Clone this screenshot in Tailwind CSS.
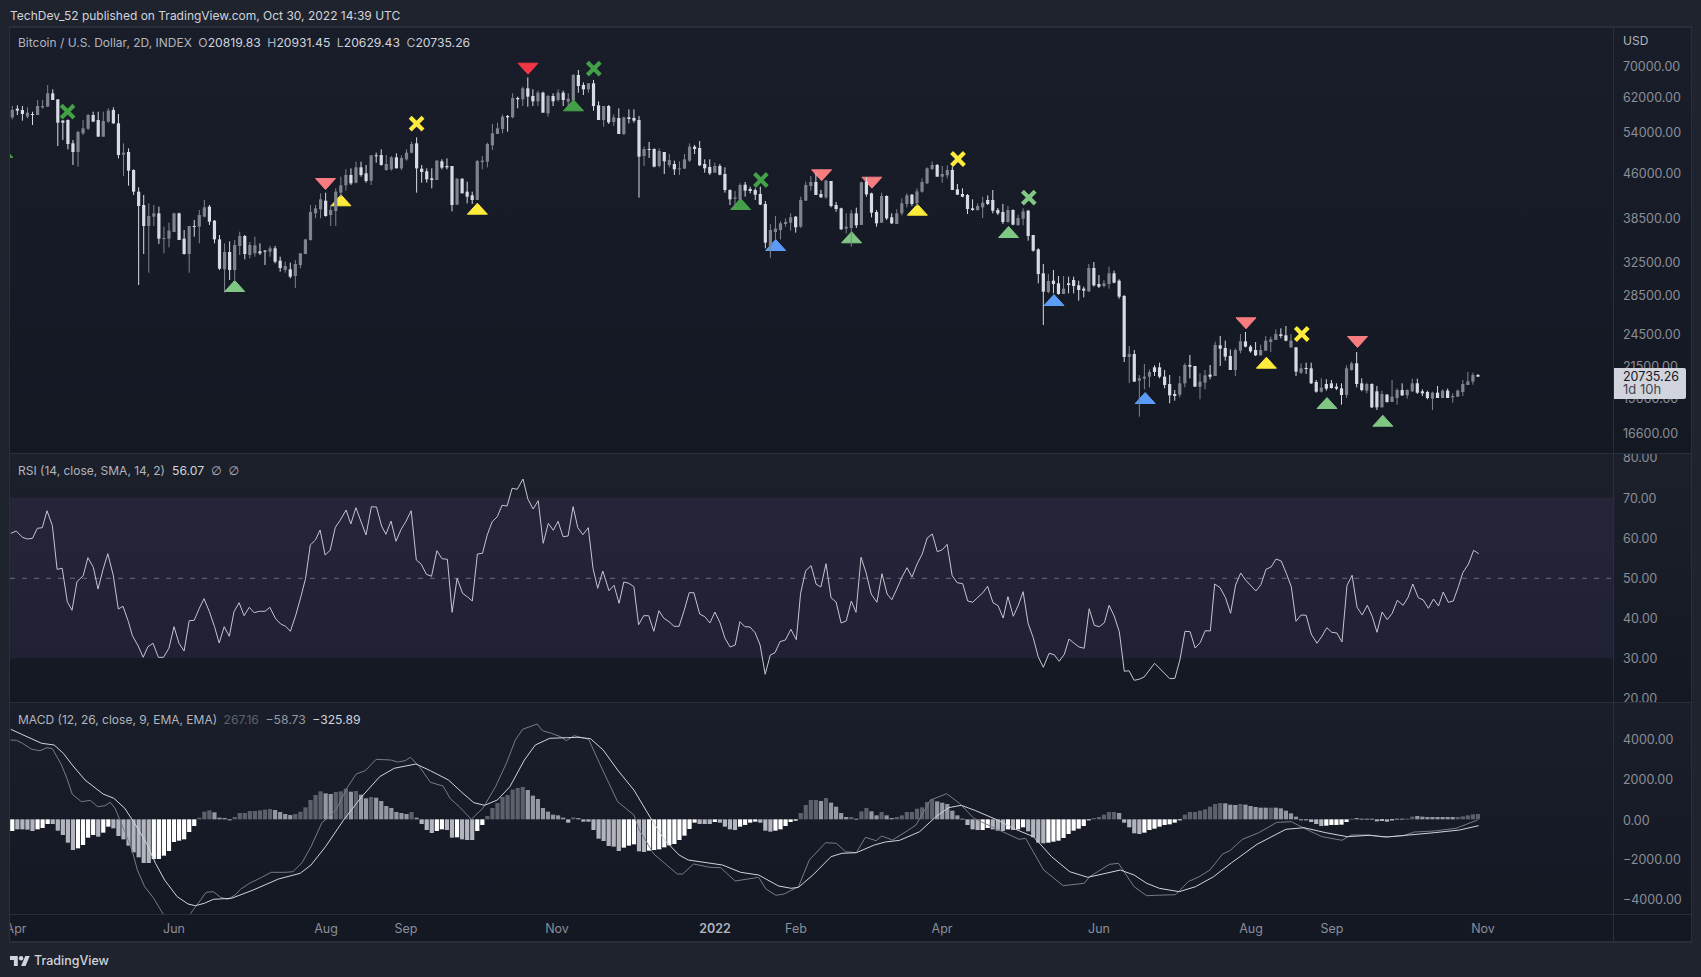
<!doctype html>
<html>

<head>
    <meta charset="UTF-8">
    <title>Bitcoin / U.S. Dollar - TradingView</title>
    <script src="https://cdn.jsdelivr.net/npm/@tailwindcss/browser@4"></script>
</head>

<body class="bg-[#1f232e] font-['Inter',sans-serif] text-[12.5px] leading-4 text-[#8b8e98] h-[977px] overflow-hidden">

<div class="h-[26px] pl-[10px] pt-[8px] text-[12px] text-[#d1d4dc]">TechDev_52 published on TradingView.com, Oct 30, 2022 14:39 UTC</div>

<div class="mx-[9px] border-x border-t-2 border-b-2 border-[#2a2e39]">

    <!-- price pane -->
    <div class="flex h-[426px] border-b border-[#2a2e39] bg-linear-to-b from-[#181d29] to-[#141823]">
        <div class="relative w-[1603px] overflow-hidden">
            <svg id="price-chart" class="block" width="1603" height="425" viewBox="10 28 1603 425"></svg>
            <div class="absolute left-[8px] top-[7px] flex gap-[6.5px] whitespace-nowrap text-[12.2px] text-[#b2b5be]">
                <span class="text-[12px]">Bitcoin / U.S. Dollar, 2D, INDEX</span>
                <span>O<span class="text-[#d1d4dc]">20819.83</span></span>
                <span>H<span class="text-[#d1d4dc]">20931.45</span></span>
                <span>L<span class="text-[#d1d4dc]">20629.43</span></span>
                <span>C<span class="text-[#d1d4dc]">20735.26</span></span>
            </div>
        </div>
        <div class="relative flex-1 border-l border-[#2a2e39] overflow-hidden">
            <span class="absolute left-[9px] top-[5px] text-[#b2b5be] text-[12px]">USD</span>
            <span class="absolute left-[9px] top-[31px]">70000.00</span>
            <span class="absolute left-[9px] top-[62px]">62000.00</span>
            <span class="absolute left-[9px] top-[97px]">54000.00</span>
            <span class="absolute left-[9px] top-[138px]">46000.00</span>
            <span class="absolute left-[9px] top-[183px]">38500.00</span>
            <span class="absolute left-[9px] top-[227px]">32500.00</span>
            <span class="absolute left-[9px] top-[260px]">28500.00</span>
            <span class="absolute left-[9px] top-[299px]">24500.00</span>
            <span class="absolute left-[9px] top-[331px]">21500.00</span>
            <span class="absolute left-[9px] top-[363px]">19000.00</span>
            <span class="absolute left-[9px] top-[398px]">16600.00</span>
            <div class="absolute left-0 top-[340px] w-[72px] h-[31px] pl-[9px] pt-[2px] rounded-r-[2px] bg-[#d1d4dc] text-[#131722] leading-[13px]">
                <div>20735.26</div>
                <div class="text-[#434651] text-[13px]">1d 10h</div>
            </div>
        </div>
    </div>

    <!-- rsi pane -->
    <div class="flex h-[249px] border-b border-[#2a2e39] bg-linear-to-b from-[#1b202b] to-[#141823]">
        <div class="relative w-[1603px] overflow-hidden">
            <svg id="rsi-chart" class="block" width="1603" height="248" viewBox="10 454 1603 248"></svg>
            <div class="absolute left-[8px] top-[9px] flex items-center gap-[7px] whitespace-nowrap text-[#b2b5be]">
                <span class="text-[12px]">RSI (14, close, SMA, 14, 2)</span>
                <span class="text-[12.2px] text-[#d1d4dc]">56.07</span>
                <span class="text-[12px] font-['DejaVu_Sans',sans-serif]">∅</span>
                <span class="text-[12px] font-['DejaVu_Sans',sans-serif]">∅</span>
            </div>
        </div>
        <div class="relative flex-1 border-l border-[#2a2e39] overflow-hidden">
            <span class="absolute left-[9px] top-[-4px]">80.00</span>
            <span class="absolute left-[9px] top-[37px]">70.00</span>
            <span class="absolute left-[9px] top-[77px]">60.00</span>
            <span class="absolute left-[9px] top-[117px]">50.00</span>
            <span class="absolute left-[9px] top-[157px]">40.00</span>
            <span class="absolute left-[9px] top-[197px]">30.00</span>
            <span class="absolute left-[9px] top-[237px]">20.00</span>
        </div>
    </div>

    <!-- macd pane -->
    <div class="flex h-[212px] border-b border-[#2a2e39] bg-linear-to-b from-[#191e2a] to-[#141823]">
        <div class="relative w-[1603px] overflow-hidden">
            <svg id="macd-chart" class="block" width="1603" height="211" viewBox="10 703 1603 211"></svg>
            <div class="absolute left-[8px] top-[9px] flex gap-[6.5px] whitespace-nowrap text-[12.2px] text-[#b2b5be]">
                <span class="text-[12px]">MACD (12, 26, close, 9, EMA, EMA)</span>
                <span class="text-[#5d606b]">267.16</span>
                <span class="text-[#9598a1]">−58.73</span>
                <span class="text-[#d1d4dc]">−325.89</span>
            </div>
        </div>
        <div class="relative flex-1 border-l border-[#2a2e39] overflow-hidden">
            <span class="absolute left-[9px] top-[29px]">4000.00</span>
            <span class="absolute left-[9px] top-[69px]">2000.00</span>
            <span class="absolute left-[9px] top-[110px]">0.00</span>
            <span class="absolute left-[9px] top-[149px]">−2000.00</span>
            <span class="absolute left-[9px] top-[189px]">−4000.00</span>
        </div>
    </div>

    <!-- time axis -->
    <div class="flex h-[26px] bg-[#141823]">
        <div class="relative w-[1603px] overflow-hidden">
            <span class="absolute -translate-x-1/2 top-[6px] left-[6px]">Apr</span>
            <span class="absolute -translate-x-1/2 top-[6px] left-[164px]">Jun</span>
            <span class="absolute -translate-x-1/2 top-[6px] left-[316px]">Aug</span>
            <span class="absolute -translate-x-1/2 top-[6px] left-[396px]">Sep</span>
            <span class="absolute -translate-x-1/2 top-[6px] left-[547px]">Nov</span>
            <span class="absolute -translate-x-1/2 top-[6px] left-[705px] font-semibold text-[12.5px] text-[#b2b5be]">2022</span>
            <span class="absolute -translate-x-1/2 top-[6px] left-[786px]">Feb</span>
            <span class="absolute -translate-x-1/2 top-[6px] left-[932px]">Apr</span>
            <span class="absolute -translate-x-1/2 top-[6px] left-[1089px]">Jun</span>
            <span class="absolute -translate-x-1/2 top-[6px] left-[1241px]">Aug</span>
            <span class="absolute -translate-x-1/2 top-[6px] left-[1322px]">Sep</span>
            <span class="absolute -translate-x-1/2 top-[6px] left-[1473px]">Nov</span>
        </div>
        <div class="flex-1 border-l border-[#2a2e39]"></div>
    </div>
</div>

<div class="flex items-center gap-[4px] pl-[10px] pt-[10px]">
    <svg width="20" height="10" viewBox="0 4 36 18" fill="#d1d4dc">
        <path d="M14 22H7V11H0V4h14v18zM28 22h-8l7.5-18h8L28 22z"/>
        <circle cx="20" cy="8" r="4"/>
    </svg>
    <span class="text-[12.5px] font-medium text-[#d1d4dc]">TradingView</span>
</div>

<script>
    // x of candle number i, in page pixels
    const barX = i => 12.3 + i * 5.054;
    // coordinates below were read off zoomed crops: x scale 2.765, y scale 3
    const pts = (offX, offY, str) => str.trim().split(/\s+/).map(p => {
        let [x, y] = p.split(",").map(Number);
        return (offX + x / 2.765).toFixed(1) + "," + (offY + y / 3).toFixed(1);
    }).join(" ");

    // hi,top,bottom,lo + colour (w = down, g = up)
    const candles = `
        318,330,352,358g 316,326,332,345w 318,330,342,362w 322,338,350,355g 335,342,344,375w 300,318,345,345g 300,318,322,326g 255,280,320,320g 268,280,300,300w 298,298,368,438w
        360,362,368,420w 358,360,432,448w 420,430,456,495w 392,396,456,500g 360,385,400,405g 342,345,386,390g 335,345,365,365w 335,360,410,410w 335,363,410,410g 325,332,365,368g
        322,330,370,372w 342,370,465,475w 430,458,464,528g 445,456,512,557w 508,510,575,585w 562,575,618,855w 585,615,678,762w 610,648,678,818g 615,640,650,678g 620,640,716,732w
        680,714,716,760g 668,692,716,742g 638,640,696,696g 638,640,720,720w 690,716,762,764w 680,678,762,818g 660,678,680,710w 630,645,680,730g 600,622,650,652g 615,620,665,675w
        660,662,718,730w 705,718,806,810w 730,756,808,878g 724,756,810,840w 720,735,810,840g 695,708,738,765g 705,708,762,778w 726,735,765,775g 710,736,760,770g 730,754,760,765w
        750,752,755,795w 738,745,755,770g 738,745,785,790w 770,782,804,815w 785,798,810,818g 788,808,830,835w 780,792,828,864g 760,760,795,805g 718,718,762,762g 615,636,720,722g
        615,625,640,655g 580,598,628,655g 578,602,648,650w 615,630,645,678g 565,575,633,678g 530,556,578,590g 508,525,556,572g 505,525,550,555w 485,502,548,550g 485,502,525,530w
        495,520,543,548w 465,466,542,555g 458,466,468,488w 448,465,495,497w 465,492,510,512g 468,472,508,512g 460,472,505,505w 466,474,505,510g 448,458,478,482g 425,432,458,460g
        412,430,505,578w 495,506,516,548w 505,514,538,548w 505,535,540,565w 480,482,540,540g 478,484,503,508w 475,498,502,508w 498,498,615,634w 535,536,614,615g 535,536,580,580w
        545,575,590,610w 575,586,600,612w 480,483,600,600g 468,482,486,508g 428,432,485,502g 372,400,436,450g 368,385,402,402g 344,350,387,400g 345,348,352,395w 280,294,352,355g
        290,294,298,325w 260,265,298,318g 232,265,290,320w 268,288,304,318w 272,278,304,318g 275,278,338,338w 285,288,340,350g 280,288,304,318w 268,278,300,305g 272,278,300,318w
        280,296,305,320g 222,225,300,305g 210,225,258,278w 247,255,268,285w 250,250,268,278g 240,250,318,332w 304,316,360,360w 318,318,360,380g 315,318,367,372w 343,352,366,378g
        325,354,402,402w 350,352,402,405g 328,352,357,370w 328,354,362,368w 348,360,470,593w 440,447,468,498g 426,447,450,474w 445,447,500,502w 445,453,498,502g 456,456,484,522w
        462,480,495,502g 482,492,508,525w 484,505,507,525g 462,478,506,506g 430,440,482,486g 435,440,447,462w 423,444,496,498w 478,492,505,518w 478,501,520,525w 488,498,518,518g
        492,498,524,526w 502,522,570,578w 568,570,598,615w 573,592,596,628g 550,555,598,600g 546,554,572,590w 560,567,573,580w 565,570,584,600w 560,582,614,615w 603,612,728,745w
        672,690,738,773g 648,686,696,718g 664,670,690,718g 655,666,672,680g 640,652,668,692g 648,650,682,698w 590,600,680,684g 545,555,602,602g 528,546,558,572g 520,546,585,585w
        570,582,592,594w 540,542,592,597g 543,543,618,622w 606,615,627,635w 623,625,688,690w 640,680,686,700g 630,640,684,740g 623,640,676,684w 545,547,675,675g 532,545,583,590w
        578,580,638,652w 630,636,670,680w 578,588,668,668g 586,588,655,660w 640,652,670,672w 628,640,672,672g 595,610,640,646g 580,586,612,622g 582,584,612,618w 565,574,610,618g
        535,546,575,578g 502,505,550,552g 484,495,507,510g 492,495,530,530w 498,522,530,548g 496,510,526,535g 500,510,570,570w 552,568,584,585w 565,582,590,592w 582,585,627,642w
        598,625,630,632w 610,618,630,632g 590,608,622,654g 586,600,612,615w 570,600,632,640w 624,630,640,645w 612,636,666,672w 618,630,666,668g 628,630,674,676w 644,654,675,678g
        625,634,656,676g 630,632,708,722w 705,705,752,755w 745,748,822,850w 792,820,875,975w 822,843,876,880g 810,842,852,880w 828,850,882,884w 828,866,882,882g 830,850,855,880w
        830,840,858,880w 842,856,870,902w 860,866,872,892w 792,804,874,876g 786,804,856,860w 825,852,860,864w 840,850,858,862g 800,820,852,866g 812,820,848,850w 838,842,890,896w
        885,888,1071,1086w 1038,1062,1071,1149g 1050,1062,1145,1145w 1125,1135,1142,1250g 1092,1130,1136,1168g 1108,1116,1130,1162g 1096,1102,1116,1128w 1088,1102,1130,1135w 1110,1130,1155,1165w 1125,1152,1186,1210w
        1170,1182,1188,1202w 1128,1150,1184,1192g 1090,1095,1150,1162g 1065,1095,1100,1135w 1098,1098,1160,1160w 1120,1145,1160,1198g 1110,1126,1148,1168g 1095,1124,1130,1138w 1025,1035,1128,1128g 1008,1036,1046,1098w
        1022,1044,1070,1082w 1048,1068,1110,1110w 1045,1050,1110,1128g 1002,1024,1052,1060g 996,1024,1040,1042w 1035,1040,1054,1058w 1026,1050,1066,1068w 1034,1050,1066,1066g 1008,1022,1052,1052g 1010,1018,1026,1056g
        988,1002,1020,1020g 985,1003,1008,1015w 978,1006,1022,1024w 1002,1022,1042,1044g 1042,1042,1115,1128w 1090,1105,1118,1122g 1088,1104,1107,1122w 1088,1105,1150,1152w 1140,1146,1175,1178w 1135,1163,1175,1178g
        1138,1152,1166,1172w 1140,1150,1164,1166w 1150,1160,1166,1170w 1150,1165,1185,1214w 1096,1105,1185,1194g 1085,1090,1110,1112g 1056,1090,1152,1162w 1135,1150,1170,1174w 1148,1152,1172,1180g 1150,1152,1222,1224w
        1158,1174,1222,1230w 1172,1182,1222,1222g 1182,1184,1206,1208w 1140,1190,1206,1206g 1165,1170,1194,1214g 1150,1170,1186,1188w 1168,1170,1186,1196g 1136,1150,1174,1176g 1136,1150,1178,1182w 1168,1174,1180,1188w
        1172,1176,1194,1198w 1175,1178,1196,1230g 1158,1178,1194,1194w 1168,1172,1194,1194g 1166,1172,1194,1194w 1180,1188,1192,1208g 1168,1172,1190,1190g 1140,1152,1176,1188g 1116,1144,1155,1155g 1118,1125,1145,1154g
        1122,1125,1130,1130w`;

    // marker kind, x, top of shape (x-marks: centre y)
    const GREEN = "#43a047", LIGHT = "#81c784", YELLOW = "#ffeb3b", BLUE = "#5b9cf6", PINK = "#f77c80", RED = "#f23645";
    const ups = [
        [234.7, 280, LIGHT], [341, 194.3, YELLOW], [477.4, 202.7, YELLOW], [573.5, 99.3, GREEN], [740.6, 198, GREEN],
        [775.7, 239, BLUE], [851.6, 231.3, LIGHT], [917.4, 203.7, YELLOW], [1008.6, 226, LIGHT], [1054, 294, BLUE],
        [1145.2, 392, BLUE], [1266.4, 356.7, YELLOW], [1327, 397, LIGHT], [1382.8, 414.7, LIGHT], [10, 154, GREEN, 3],
    ];
    const downs = [
        [325.5, 178, PINK], [528, 62.7, RED], [821.6, 169.3, PINK], [871.9, 176.7, PINK],
        [1246, 317.3, PINK], [1357.5, 336, PINK],
    ];
    const crosses = [
        [67.6, 111.7, GREEN], [416.6, 123.7, YELLOW], [593.8, 68.7, GREEN], [760.9, 180, GREEN],
        [958, 159, YELLOW], [1028.8, 197.7, LIGHT], [1301.8, 334, YELLOW],
    ];

    let price = "";
    for (let [x, y, c, s] of ups) {
        let k = s || 10;
        price += `<polygon points="${x - k},${y + k * 1.15} ${x},${y + 0.5} ${x + k},${y + k * 1.15}" fill="${c}" stroke="${c}" stroke-width="1" stroke-linejoin="round"/>`;
    }
    for (let [x, y, c] of downs) {
        price += `<polygon points="${x - 10},${y + 0.5} ${x + 10},${y + 0.5} ${x},${y + 11.5}" fill="${c}" stroke="${c}" stroke-width="1" stroke-linejoin="round"/>`;
    }
    for (let [x, y, c] of crosses) {
        price += `<path d="M${x - 6.4} ${y - 6.4}L${x + 6.4} ${y + 6.4}M${x + 6.4} ${y - 6.4}L${x - 6.4} ${y + 6.4}" fill="none" stroke="${c}" stroke-width="4.2"/>`;
    }
    candles.trim().split(/\s+/).forEach((tok, i) => {
        let [hi, top, bot, lo] = tok.split(",").map(v => parseFloat(v) / 3);
        let x = barX(i);
        let col = tok.endsWith("w") ? "#d8dbe3" : "#80838e";
        price += `<rect x="${x - 0.5}" y="${hi}" width="1" height="${lo - hi}" fill="${col}"/>`;
        price += `<rect x="${x - 1.6}" y="${top}" width="3.2" height="${Math.max(bot - top, 1)}" fill="${col}"/>`;
    });
    document.querySelector("#price-chart").innerHTML = price;

    // RSI
    const rsiLine = [
        pts(0, 440, `30,280 45,273 62,292 76,297 90,295 103,265 117,263 130,212 145,257 158,388 172,385 186,485 199,511 213,425 230,407 243,353 258,382 271,447 285,388 298,341 313,405 327,507 340,499 355,545 366,587 382,618 396,652 409,620 423,610 438,652 452,652 467,625 481,560 495,610 509,633 523,542 537,541 551,505 564,476 579,515 593,560 606,609 620,560 634,589 647,515 661,488 675,527 689,502 703,518 717,514 733,514 746,502 762,536 776,552 790,559 803,574 818,525 832,470 845,415 858,315 872,300 885,270 899,345 913,331 927,262 941,240 957,210 970,252 984,203 1012,285 1027,200 1041,201 1055,258 1067,283 1081,243 1095,304 1109,268 1122,245 1137,212 1151,360 1165,373 1179,403 1193,409 1208,332 1222,356 1237,358 1250,517 1264,415 1279,460 1293,471 1306,483 1320,342 1334,340 1347,285 1361,245 1375,230 1388,196 1402,198 1416,145 1430,148 1446,117 1460,178 1474,207 1488,182 1502,310 1516,250 1530,271 1543,244 1557,290`),
        pts(567, 440, `3,288 17,200 30,263 44,284 59,263 72,385 85,445 99,393 116,452 130,436 144,490 157,426 171,430 185,440 198,554 212,527 226,527 240,574 254,512 268,535 282,545 296,559 310,559 323,515 338,458 351,458 367,522 381,530 395,549 409,516 423,548 437,595 451,621 465,615 478,545 492,560 506,561 520,578 534,615 548,703 562,645 575,638 589,605 604,600 619,568 634,599 646,460 660,392 675,377 689,433 702,441 716,371 730,473 744,486 758,549 772,543 786,483 799,517 813,352 827,398 841,462 857,487 871,401 885,462 898,479 912,447 926,412 940,383 954,411 968,372 982,342 996,294 1010,282 1024,335 1038,329 1051,313 1065,407 1079,428 1094,431 1108,483 1122,487 1136,472 1150,458 1163,439 1178,488 1192,497 1206,534 1219,470 1234,529 1248,495 1261,455 1275,550 1289,593 1303,650 1317,682 1333,640 1347,644 1361,664 1375,643 1388,597 1402,610 1416,621 1430,625 1444,506 1458,556 1472,560 1486,548 1499,496 1513,528 1527,575 1541,694 1554,692 1568,721`),
        pts(1134, 440, `14,718 28,711 57,670 99,716 113,715 127,660 141,574 155,575 169,624 183,608 197,572 211,573 223,432 238,443 253,473 267,520 281,435 295,399 309,421 337,453 351,434 365,388 379,381 393,357 407,363 421,400 435,440 448,544 462,525 476,526 490,582 506,610 520,588 533,563 547,577 561,579 575,606 589,436 603,406 617,502 631,525 645,496 659,530 672,577 686,516 700,539 714,520 728,481 744,496 758,472 771,432 786,473 800,480 814,505 828,477 842,498 855,456 869,487 883,483 897,440 909,398 925,372 939,331 953,341`),
    ].join(" ");
    document.querySelector("#rsi-chart").innerHTML = `
        <defs><linearGradient id="band" x1="0" y1="0" x2="0" y2="1"><stop offset="0" stop-color="#262439"/><stop offset="1" stop-color="#202135"/></linearGradient></defs>
        <rect x="10" y="497.7" width="1603" height="160.6" fill="url(#band)"/>
        <line x1="10" y1="578.3" x2="1613" y2="578.3" stroke="#6a6c7c" stroke-dasharray="5 7"/>
        <polyline points="${rsiLine}" fill="none" stroke="#c3c6cf" stroke-width="1"/>`;

    // MACD histogram: bar end y + colour, w/l below zero, d/m above
    const hist = [
        [0, `393w 388l 388l 389l 393l 388w 384w 372w 372l 392l 405l 428l 450l 445w 435w 413w 405w 410l 398w 380w 385l 408l 418l 437l 457l 472l 489l 489l 477w 477w 467w 453w 426w 422w 418w 396w 378w 353d 335d 331d 337m 353m 354m 360l 351d 339d 339d 333d 333d 331d 329d 327d 330m 336m 342m 345m 342d 335d 322d 300d 285d 274d 280m 282m 276d 274d 266d 275m 273d 284m 295m 291d 293m 303m 318m 324m 336m 339m 342m 336d 353m 372l 390l 399l 393w 388w 390l 413l 412w 418l 420l 420l 393w 375w 348d 324d 309d 291d 285d 269d 264d 261d 270m 287m 297m 324m 335m 344m 346m 353m`],
        [110, `368l 352d 354m 365l 365l 390l 416l 423l 438l 440l 453l 443w 437w 433w 454l 456l 452w 450w 448w 442w 436w 432w 420w 407w 387w 368w 372l 372l 372l 366w 368l 380l 388l 390l 380w 375w 368w 365w 368l 392l 395l 392w 388w 378w 366w 362w 339d 315d 300d 300d 303m 294d 308m 320m 339m 351m 351d 356m 334d 324d 334m 346m 336d 346m 354m 351d 346d 336d 336d 326d 322d 306d 298d 304m 308m 312m 332m 346m 356m 375l 388l 390l 390w 384w 388l 392l 393l 388w 390l 388w 382w 394l 412l 428l 430l 428w 425w 422w 414w 402w 392w 386w 378w 360w 354d 351d 344d 336d 336d 339m 368l 382l`],
        [222, `400l 402l 398w 390w 386w 380w 375w 373w 368w 360w 344d 336d 336d 332d 328d 320d 312d 309d 310m 314m 315m 312d 314m 318m 321m 323m 323m 323d 323m 325m 332m 340m 350m 360l 360l 366l 372l 378l 377w 375w 375w 374w 366w 356d 354m 356m 356m 356m 364l 362w 365l 360w 356m 356m 356d 350d 348m 350m 351m 351m 351m 351m 351m 351m 351d 349d 346d 343d 342d`],
    ];
    const histCol = { w: "#ffffff", l: "#b2b5be", d: "#5d606b", m: "#9598a1" };
    let macd = "";
    const zeroY = 700 + 358 / 3;
    for (let [start, list] of hist) {
        list.split(" ").forEach((tok, k) => {
            let y = 700 + parseFloat(tok) / 3;
            let x = barX(start + k);
            let top = Math.min(y, zeroY), h = Math.max(Math.abs(y - zeroY), 1);
            macd += `<rect x="${x - 2.1}" y="${top}" width="4.2" height="${h}" fill="${histCol[tok.slice(-1)]}"/>`;
        });
    }
    const macdLine = [
        pts(0, 700, `30,120 45,121 62,130 88,148 110,152 130,143 145,146 170,195 185,235 200,283 225,305 250,301 270,320 290,317 305,307 318,325 345,395 365,450 380,510 400,560 425,595 450,640 480,680 510,680 527,640 550,607 570,577 590,575 610,592 630,598 650,585 665,568 690,550 720,534 750,517 790,517 810,515 835,488 860,440 890,368 910,350 930,328 960,263 985,222 1010,212 1040,178 1080,180 1100,186 1120,182 1135,172 1160,200 1190,247 1225,258 1245,296 1270,320 1303,358 1335,325 1370,260 1400,190 1425,120 1445,88 1465,80 1485,72 1500,92 1525,100 1550,110 1566,122`),
        pts(567, 700, `20,107 60,118 90,190 140,305 185,345 200,390 240,462 265,485 305,522 320,522 350,492 395,502 425,503 465,543 530,532 550,567 578,586 600,582 640,560 670,480 715,428 745,430 770,455 800,458 825,412 855,422 870,408 900,420 940,393 965,375 1005,300 1050,281 1085,310 1125,355 1190,388 1250,418 1268,415 1318,510 1372,557 1430,550 1445,530 1500,493 1525,490 1568,560`),
        pts(1134, 700, `35,587 60,586 115,584 150,545 180,530 210,510 245,462 265,452 300,418 345,398 395,367 435,365 480,390 520,410 575,421 600,405 650,405 690,411 745,407 775,396 830,393 890,385 950,360`),
    ].join(" ");
    const signalLine = [
        pts(0, 700, `30,88 60,103 115,130 150,135 175,160 200,195 235,240 285,282 315,295 345,325 375,375 405,430 430,490 455,540 490,590 520,612 540,617 565,610 590,598 640,595 700,570 770,537 830,520 860,495 900,440 950,360 1000,290 1050,230 1090,205 1150,192 1190,212 1240,240 1280,280 1310,308 1340,316 1375,300 1410,260 1450,180 1480,135 1520,115 1566,113`),
        pts(567, 700, `30,112 65,116 100,150 140,210 185,270 230,352 270,420 310,465 335,480 430,495 480,517 530,525 585,558 620,565 640,562 680,525 730,470 760,460 800,458 850,435 880,426 920,421 975,395 1020,350 1055,323 1090,316 1130,332 1190,360 1240,388 1290,410 1340,470 1390,515 1440,532 1490,520 1530,510 1568,525`),
        pts(1134, 700, `35,550 70,565 125,575 170,560 220,530 270,488 340,433 420,388 470,383 530,398 590,410 650,406 700,411 760,405 830,398 900,390 953,377`),
    ].join(" ");
    macd += `<polyline points="${macdLine}" fill="none" stroke="#787b86" stroke-width="1"/>`;
    macd += `<polyline points="${signalLine}" fill="none" stroke="#d1d4dc" stroke-width="1"/>`;
    document.querySelector("#macd-chart").innerHTML = macd;
</script>

</body>

</html>
